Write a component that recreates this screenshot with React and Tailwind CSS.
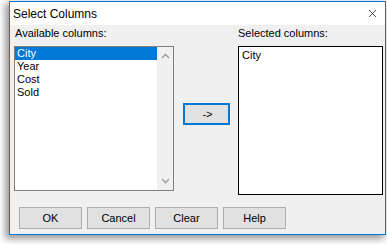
import { X } from "lucide-react";

const columns = ["City", "Year", "Cost", "Sold"];
const buttons = ["OK", "Cancel", "Clear", "Help"];

function ScrollArrow({ down }) {
  return (
    <svg width="9" height="6" viewBox="0 0 9 6" className="mx-auto">
      <path
        d={down ? "M1 1 L4.5 4.5 L8 1" : "M1 5 L4.5 1.5 L8 5"}
        fill="none"
        stroke="#a3a3a3"
        strokeWidth="1.6"
      />
    </svg>
  );
}

export default function App() {
  return (
    <div className="h-[244px] w-[387px] overflow-hidden bg-white font-['Liberation_Sans',Arial,sans-serif] text-black">
      <div className="ml-[9px] mt-px flex h-[234px] w-[377px] flex-col border border-[#0078d7] bg-[#f0f0f0] shadow-[-3px_3px_7px_1px_rgba(0,0,0,0.4)]">
        <header className="flex h-[23px] items-center justify-between bg-white pl-[3px] pr-[6px]">
          <span className="text-[12px] leading-none">Select Columns</span>
          <X className="h-[13px] w-[13px]" strokeWidth={1.3} />
        </header>

        <div className="flex pl-[4px] text-[11px] leading-[13px]">
          <div className="w-[160px]">
            <p className="mb-[6px] mt-[2px] h-[13px] pl-px">Available columns:</p>
            <div className="flex h-[145px] border border-[#7f7f7f] bg-white">
              <ul className="flex-1">
                {columns.map((col, i) => (
                  <li
                    key={col}
                    className={
                      i === 0
                        ? "h-[13px] bg-[#0078d7] pl-[2px] text-white"
                        : "h-[13px] pl-[2px]"
                    }
                  >
                    {col}
                  </li>
                ))}
              </ul>
              <div className="flex w-[16px] flex-col justify-between bg-[#f0f0f0] py-[6px]">
                <ScrollArrow />
                <ScrollArrow down />
              </div>
            </div>
          </div>

          <div className="ml-[9px] mt-[78px] self-start">
            <button className="flex h-[22px] w-[47px] items-center justify-center border-2 border-[#0078d7] bg-[#e1e1e1] pl-[2px] text-[11px]">
              -&gt;
            </button>
          </div>

          <div className="ml-[8px] w-[145px]">
            <p className="mb-[6px] mt-[2px] h-[13px]">Selected columns:</p>
            <div className="h-[149px] border border-black bg-white pl-[3px] pt-[2px]">
              City
            </div>
          </div>
        </div>

        <div className="ml-[9px] mt-[12px] flex gap-[5px]">
          {buttons.map((label) => (
            <button
              key={label}
              className="flex h-[22px] w-[63px] items-center justify-center border border-[#adadad] bg-[#e1e1e1] text-[11px]"
            >
              {label}
            </button>
          ))}
        </div>
      </div>
    </div>
  );
}
